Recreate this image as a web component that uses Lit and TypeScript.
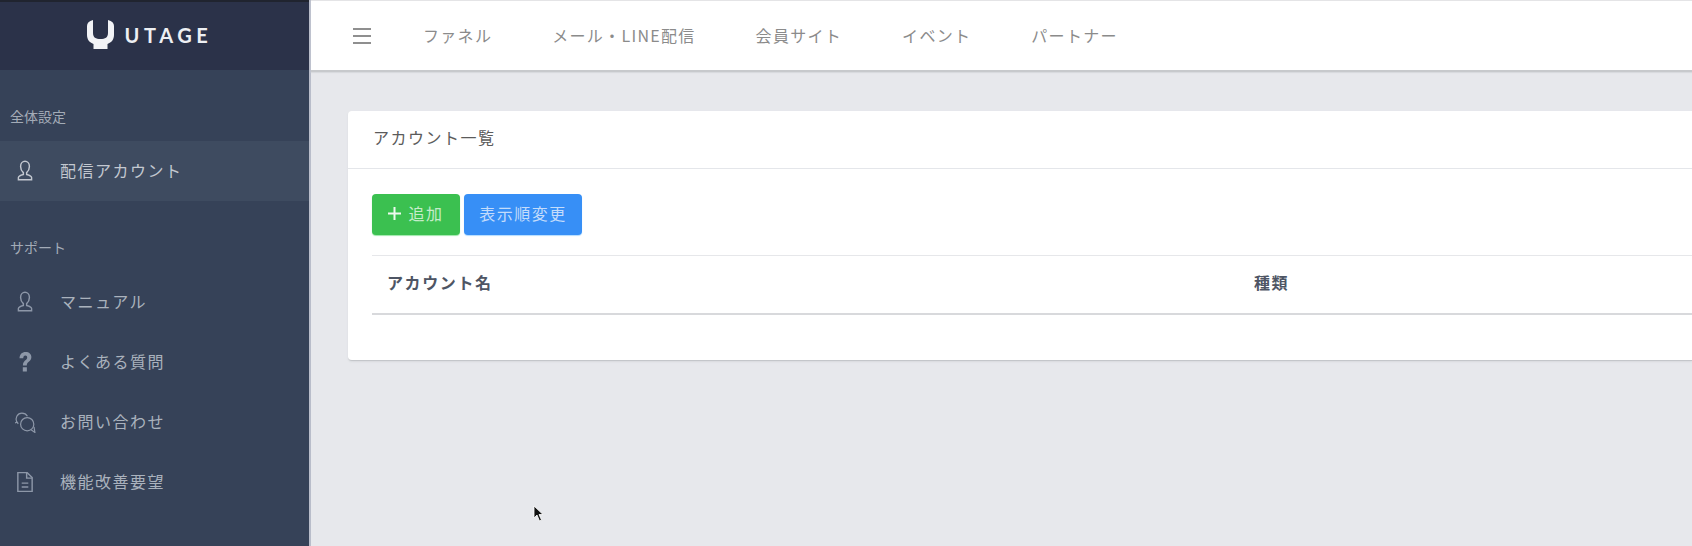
import { LitElement, css, html, svg } from 'lit';
import { customElement } from 'lit/decorators.js';

const user = svg`<path d="M8.500 11.500C6.600 9.800 6 7.800 6 5.800 6 3 7.800 1.200 10 1.200s4 1.800 4 4.600c0 2-.6 4-2.500 5.700v1.700c2.200.6 4.500 1.300 4.500 2.800v2H4v-2c0-1.500 2.300-2.200 4.500-2.800z" fill="none" stroke="currentColor" stroke-width="1.300"/>`;
const question = svg`<path d="M5 6.500C5.300 3 7.300 1 10.500 1c3.300 0 5.300 1.900 5.300 4.500 0 4.200-4.200 4-4.200 7.700H8.100c0-4.800 3.900-4.700 3.900-7.300 0-1.100-.6-1.800-1.700-1.800-1.200 0-1.800.9-1.900 2.400zM8 14.800h3.700v3.900H8z" fill="currentColor"/>`;
const chat = svg`<g fill="none" stroke="currentColor" stroke-width="1.100"><path d="M2.500 10.500C.6 6.500 3 2 7.200 2c2.300 0 4 1 5 2.800"/><path d="M1 10.800l2-.6.800 1.500"/><circle cx="12" cy="12" r="6"/><path d="M15.500 17l3.500 2.500-.8-5"/></g>`;
const doc = svg`<g fill="none" stroke="currentColor" stroke-width="1.300"><path d="M3.500 1.500h8.500l4.500 4.500v12.500h-13z"/><path d="M11.500 1.500v5h5"/><path d="M7 11h6M7 14.500h6"/></g>`;

@customElement('app-root')
export class AppRoot extends LitElement {
  static styles = css`
    :host {
      display: flex;
      width: 1692px;
      height: 546px;
      overflow: hidden;
      position: relative;
      background: #e7e8ec;
      font-family: "Noto Sans CJK JP", "Liberation Sans", sans-serif;
    }
    .sidebar {
      width: 309px;
      flex: none;
      background: #364258;
      border-right: 2px solid #b9bdca;
      color: #aab2bd;
    }
    .brand {
      height: 70px;
      box-sizing: border-box;
      border-top: 2px solid #20242f;
      background: #2b3249;
      display: flex;
      align-items: center;
      justify-content: center;
      gap: 11px;
      padding: 0 10px 3px 0;
    }
    .brand svg { display: block; }
    .brand span {
      color: #edeff3;
      font: 700 20px "Lato", sans-serif;
      letter-spacing: 4.600px;
    }
    .label {
      font-size: 14px;
      line-height: 20px;
      padding-left: 10px;
      color: #a3abb7;
    }
    .label.first { padding-top: 36px; height: 35px; }
    .label.second { padding-top: 36px; height: 35px; }
    .item {
      height: 60px;
      display: flex;
      align-items: center;
      gap: 24px;
      padding-left: 14px;
      font-size: 16px;
      letter-spacing: 1.500px;
    }
    .item span { position: relative; top: -1px; }
    .item.active { background: #3e4b60; color: #c3c8d0; }
    .item svg { flex: none; color: #8d97a8; }
    .item.active svg { color: #c3c8d0; }
    .main { flex: 1; min-width: 0; }
    .topbar {
      height: 72px;
      box-sizing: border-box;
      background: #fff;
      border-top: 1px solid #e4e4e6;
      border-bottom: 2px solid #c7c9cc;
      box-shadow: 0 1px 1px #d8dade;
      display: flex;
      align-items: center;
      padding-left: 42px;
      color: #8b8b8b;
      font-size: 16px;
      letter-spacing: 1.300px;
      margin-bottom: 39px;
    }
    .burger {
      width: 18px;
      height: 16px;
      margin-right: 52px;
      border-top: 2px solid #8f8f8f;
      border-bottom: 2px solid #8f8f8f;
      box-sizing: border-box;
      display: flex;
      align-items: center;
    }
    .burger i { display: block; width: 100%; height: 2px; background: #8f8f8f; }
    .nav { display: flex; gap: 60px; position: relative; top: -1px; }
    .card {
      margin-left: 37px;
      height: 250px;
      box-sizing: border-box;
      background: #fff;
      border-radius: 4px 0 0 4px;
      border-bottom: 1px solid #c4c6ca;
      box-shadow: 0 1px 2px #d8dade;
    }
    .card-head {
      height: 58px;
      box-sizing: border-box;
      border-bottom: 1px solid #e4e6ea;
      padding: 0 0 6px 25px;
      display: flex;
      align-items: center;
      font-size: 16px;
      letter-spacing: 1.500px;
      color: #5b5b5b;
    }
    .card-body { padding: 25px 0 0 24px; }
    .actions { display: flex; gap: 4px; }
    .btn {
      height: 41px;
      box-sizing: border-box;
      display: flex;
      align-items: center;
      justify-content: center;
      padding-bottom: 3px;
      border-radius: 4px;
      font-size: 16px;
      letter-spacing: 1px;
    }
    .btn.add {
      width: 88px;
      gap: 7px;
      background: #3bc050;
      color: #c6eccb;
      box-shadow: 0 1px 1px #9ce8a8;
    }
    .btn.add span { letter-spacing: 1.500px; }
    .btn.add svg { color: #eef9ef; }
    .btn.sort {
      width: 118px;
      letter-spacing: 1.500px;
      background: #378ff6;
      color: #c3dcfb;
      box-shadow: 0 1px 1px #b2dcff;
    }
    .thead {
      margin-top: 20px;
      height: 60px;
      box-sizing: border-box;
      border-top: 1px solid #e6e7ea;
      border-bottom: 2px solid #d8d9dc;
      padding-bottom: 6px;
      display: grid;
      grid-template-columns: 867px 1fr;
      align-items: center;
      font-weight: 700;
      font-size: 16px;
      letter-spacing: 1.600px;
      color: #4e5564;
    }
    .thead div { padding-left: 15px; }
    .cursor { position: absolute; left: 533px; top: 505px; }
  `;

  private icon(body: unknown) {
    return html`<svg width="22" height="22" viewBox="0 0 20 20">${body}</svg>`;
  }

  render() {
    return html`
      <aside class="sidebar">
        <div class="brand">
          <svg width="27" height="29" viewBox="0 0 27 29">
            <path d="M0 6C0 3 2 1 6 0v13c0 4.500 2.800 6 7.500 6s7.500-1.500 7.500-6V0C25 1 27 3 27 6v9c0 4.500-2.500 7.500-6.500 9v5h-14v-5C2.500 22.500 0 19.500 0 15z" fill="#f2f3f6"/>
          </svg>
          <span>UTAGE</span>
        </div>
        <div class="label first">全体設定</div>
        <div class="item active">${this.icon(user)}<span>配信アカウント</span></div>
        <div class="label second">サポート</div>
        <div class="item">${this.icon(user)}<span>マニュアル</span></div>
        <div class="item">${this.icon(question)}<span>よくある質問</span></div>
        <div class="item">${this.icon(chat)}<span>お問い合わせ</span></div>
        <div class="item">${this.icon(doc)}<span>機能改善要望</span></div>
      </aside>
      <div class="main">
        <header class="topbar">
          <div class="burger"><i></i></div>
          <nav class="nav">
            <span>ファネル</span>
            <span>メール・LINE配信</span>
            <span>会員サイト</span>
            <span>イベント</span>
            <span>パートナー</span>
          </nav>
        </header>
        <section class="card">
          <div class="card-head">アカウント一覧</div>
          <div class="card-body">
            <div class="actions">
              <div class="btn add">
                <svg width="13" height="13" viewBox="0 0 13 13"><path d="M6.500 0v13M0 6.500h13" stroke="currentColor" stroke-width="2"/></svg>
                <span>追加</span>
              </div>
              <div class="btn sort">表示順変更</div>
            </div>
            <div class="thead">
              <div>アカウント名</div>
              <div>種類</div>
            </div>
          </div>
        </section>
      </div>
      <svg class="cursor" width="11" height="17" viewBox="0 0 11 17">
        <path d="M1 1v12l3-3 2.500 6 2-1-2.500-5.500h4z" fill="#111" stroke="#fff" stroke-width=".8"/>
      </svg>
    `;
  }
}
